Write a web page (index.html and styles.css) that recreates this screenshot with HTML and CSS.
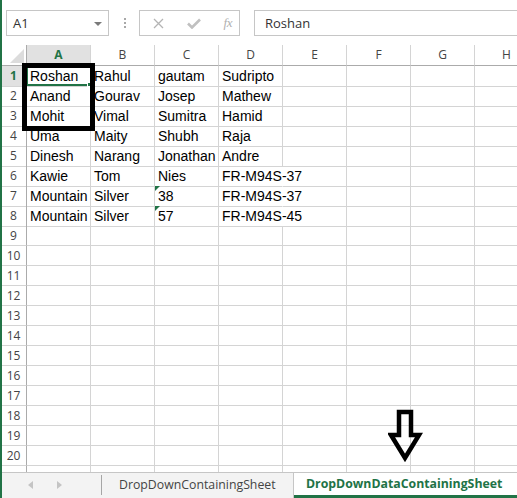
FILE: index.html
```html
<!DOCTYPE html>
<html>
<head>
<meta charset="utf-8">
<link rel="stylesheet" href="styles.css">
</head>
<body>
<div class="app">
  <div class="fbar">
    <div class="namebox"><span>A1</span><svg class="dd" width="8" height="4" viewBox="0 0 8 4"><path d="M0 0H8L4 4Z" fill="#7a7a7a"/></svg></div>
    <div class="dots"><i></i><i></i><i></i></div>
    <div class="fbtns">
      <svg width="11" height="11" viewBox="0 0 11 11"><path d="M1 1L10 10M10 1L1 10" stroke="#b4b4b4" stroke-width="1.3" fill="none"/></svg>
      <svg width="14" height="11" viewBox="0 0 14 11"><path d="M1 5.5L5 9.5L13 1.5" stroke="#c0c0c0" stroke-width="2.6" fill="none"/></svg>
      <span class="fx">fx</span>
    </div>
    <div class="finput">Roshan</div>
  </div>

  <div class="sheet">
    <div class="row hdr"><i class="corner"><svg width="14" height="14" viewBox="0 0 14 14"><path d="M14 0V14H0Z" fill="#dcdcdc"/></svg></i><i class="sel">A</i><i>B</i><i>C</i><i>D</i><i>E</i><i>F</i><i>G</i><i>H</i></div>
    <div class="row"><i class="rh on">1</i><i>Roshan</i><i>Rahul</i><i>gautam</i><i>Sudripto</i><i></i><i></i><i></i><i></i></div>
    <div class="row"><i class="rh">2</i><i>Anand</i><i>Gourav</i><i>Josep</i><i>Mathew</i><i></i><i></i><i></i><i></i></div>
    <div class="row"><i class="rh">3</i><i>Mohit</i><i>Vimal</i><i>Sumitra</i><i>Hamid</i><i></i><i></i><i></i><i></i></div>
    <div class="row"><i class="rh">4</i><i>Uma</i><i>Maity</i><i>Shubh</i><i>Raja</i><i></i><i></i><i></i><i></i></div>
    <div class="row"><i class="rh">5</i><i>Dinesh</i><i>Narang</i><i>Jonathan</i><i>Andre</i><i></i><i></i><i></i><i></i></div>
    <div class="row"><i class="rh">6</i><i>Kawie</i><i>Tom</i><i>Nies</i><i class="spill">FR-M94S-37</i><i></i><i></i><i></i><i></i></div>
    <div class="row"><i class="rh">7</i><i>Mountain</i><i>Silver</i><i class="txtnum">38</i><i class="spill">FR-M94S-37</i><i></i><i></i><i></i><i></i></div>
    <div class="row"><i class="rh">8</i><i>Mountain</i><i>Silver</i><i class="txtnum">57</i><i class="spill">FR-M94S-45</i><i></i><i></i><i></i><i></i></div>
    <div class="row"><i class="rh">9</i><i></i><i></i><i></i><i></i><i></i><i></i><i></i><i></i></div>
    <div class="row"><i class="rh">10</i><i></i><i></i><i></i><i></i><i></i><i></i><i></i><i></i></div>
    <div class="row"><i class="rh">11</i><i></i><i></i><i></i><i></i><i></i><i></i><i></i><i></i></div>
    <div class="row"><i class="rh">12</i><i></i><i></i><i></i><i></i><i></i><i></i><i></i><i></i></div>
    <div class="row"><i class="rh">13</i><i></i><i></i><i></i><i></i><i></i><i></i><i></i><i></i></div>
    <div class="row"><i class="rh">14</i><i></i><i></i><i></i><i></i><i></i><i></i><i></i><i></i></div>
    <div class="row"><i class="rh">15</i><i></i><i></i><i></i><i></i><i></i><i></i><i></i><i></i></div>
    <div class="row"><i class="rh">16</i><i></i><i></i><i></i><i></i><i></i><i></i><i></i><i></i></div>
    <div class="row"><i class="rh">17</i><i></i><i></i><i></i><i></i><i></i><i></i><i></i><i></i></div>
    <div class="row"><i class="rh">18</i><i></i><i></i><i></i><i></i><i></i><i></i><i></i><i></i></div>
    <div class="row"><i class="rh">19</i><i></i><i></i><i></i><i></i><i></i><i></i><i></i><i></i></div>
    <div class="row"><i class="rh">20</i><i></i><i></i><i></i><i></i><i></i><i></i><i></i><i></i></div>
    <div class="row"><i class="rh"></i><i></i><i></i><i></i><i></i><i></i><i></i><i></i><i></i></div>
  </div>

  <div class="tabs">
    <div class="nav">
      <svg width="5" height="8" viewBox="0 0 5 8"><path d="M5 0V8L0 4Z" fill="#c4c4c4"/></svg>
      <svg width="5" height="8" viewBox="0 0 5 8"><path d="M0 0V8L5 4Z" fill="#c4c4c4"/></svg>
    </div>
    <div class="sep"></div>
    <div class="tab">DropDownContainingSheet</div>
    <div class="tab active">DropDownDataContainingSheet</div>
  </div>

  <div class="activecell"></div>
  <div class="handle"></div>
  <div class="markbox"></div>
  <svg class="arrow" width="38" height="56" viewBox="0 0 38 56"><path d="M11 4H23V27H31L17 50L3 27H11Z" fill="none" stroke="#000" stroke-width="4.5" stroke-linejoin="miter"/></svg>
</div>
</body>
</html>
```

FILE: styles.css
```css
* { box-sizing: border-box; margin: 0; padding: 0; }
html, body { width: 517px; height: 498px; overflow: hidden; background: #fff; }
body { font-family: "Open Sans", "Noto Sans", sans-serif; }
.app { position: relative; width: 517px; height: 498px; border-left: 2px solid #217346; overflow: hidden; }

/* formula bar */
.fbar { height: 45px; display: flex; align-items: flex-start; padding: 10px 0 0 4px; }
.namebox { flex: none; width: 103px; height: 26px; border: 1px solid #c6c6c6; display: flex; align-items: center; justify-content: space-between; padding: 0 6px 0 6px; font-size: 13px; color: #333; }
.namebox .dd { margin-top: 1px; }
.dots { flex: none; width: 30px; height: 26px; display: flex; flex-direction: column; align-items: center; justify-content: center; gap: 2px; padding-left: 1px; }
.dots i { display: block; width: 2px; height: 2px; background: #a8a8a8; }
.fbtns { flex: none; width: 101px; height: 26px; border: 1px solid #c6c6c6; display: flex; align-items: center; justify-content: space-between; padding: 0 7px 0 13px; }
.fx { font: italic 13px "Liberation Serif", serif; color: #b0b0b0; letter-spacing: -0.5px; }
.finput { flex: none; width: 280px; margin-left: 14px; height: 26px; border: 1px solid #c6c6c6; border-right: none; padding-left: 10px; font-size: 13px; line-height: 24px; color: #333; }

/* sheet grid */
.sheet { height: 427px; overflow: hidden; }
.row { display: grid; grid-template-columns: 25px repeat(8, 64px); height: 20px; }
.row > i { display: block; font-style: normal; border-right: 1px solid #d4d4d4; border-bottom: 1px solid #d4d4d4; font: 14px/19px "Liberation Sans", Arial, sans-serif; color: #000; padding: 1px 0 0 3px; white-space: nowrap; position: relative; }
.row > i.rh { border-right-color: #ababab; font: 12px/19px "Open Sans", sans-serif; color: #444; text-align: center; padding: 0 1px 0 0; }
.row > i.rh.on { background: #e1e1e1; color: #217346; font-weight: 700; border-right: 1px solid #217346; }
.row > i.spill { border-right-color: transparent; }
.row > i.txtnum::before { content: ""; position: absolute; left: 0; top: 0; border-top: 5px solid #217346; border-right: 5px solid transparent; }

.hdr { height: 21px; }
.hdr > i { border-bottom: 1px solid #ababab; font: 12px/20px "Open Sans", sans-serif; color: #444; text-align: center; padding: 0; }
.hdr > i.corner { border-right-color: #ababab; display: flex; align-items: flex-end; justify-content: flex-end; padding: 0 2px 2px 0; }
.hdr > i.sel { background: #e1e1e1; color: #217346; font-weight: 700; border-bottom: 1px solid #217346; }

/* sheet tabs */
.tabs { height: 26px; border-top: 1px solid #c6c6c6; background: #f3f3f3; display: flex; }
.nav { flex: none; width: 99px; display: flex; align-items: center; gap: 24px; padding: 0 0 1px 26px; }
.sep { flex: none; width: 1px; height: 20px; margin-top: 2px; background: #a6a6a6; }
.tab { flex: none; font-size: 12.3px; line-height: 24px; color: #444; padding: 0 17px 0 17px; border-right: 1px solid #c6c6c6; width: 192px; }
.tab.active { flex: 1; width: auto; background: #fff; color: #217346; font-weight: 700; padding-left: 12px; border-right: none; border-bottom: 3px solid #217346; line-height: 22px; }

/* overlays */
.activecell { position: absolute; left: 24px; top: 64px; width: 66px; height: 22px; border: 2px solid #217346; }
.handle { position: absolute; left: 85px; top: 82px; width: 5px; height: 5px; background: #217346; border: 1px solid #fff; }
.markbox { position: absolute; left: 20px; top: 63px; width: 73px; height: 68px; border: 5px solid #000; }
.arrow { position: absolute; left: 386px; top: 408px; }
```
